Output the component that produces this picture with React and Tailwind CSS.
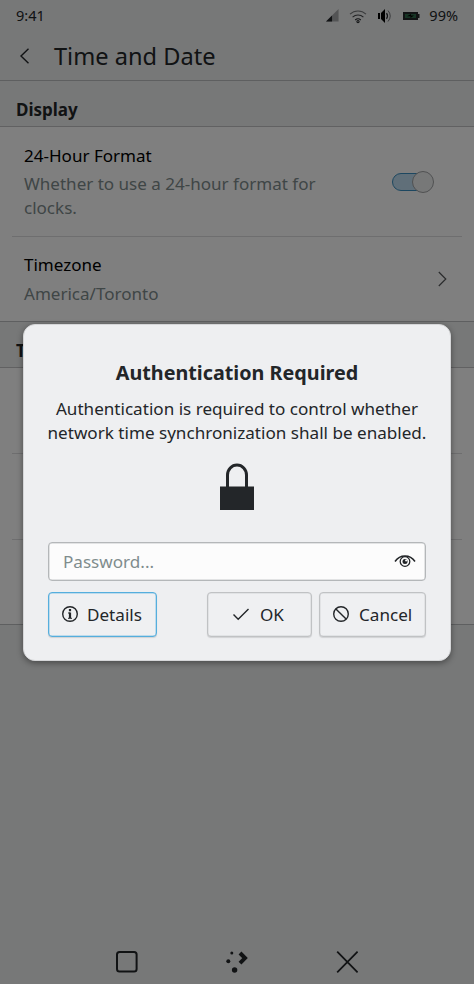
import React from 'react';

function StatusBar() {
  return (
    <div className="flex h-[31px] shrink-0 items-center justify-between pl-4 pr-4 text-[14.5px] leading-none">
      <span>9:41</span>
      <div className="flex items-center">
        <svg className="mr-[10px] h-[13px] w-[13px]" viewBox="0 0 14 14">
          <path d="M0 13.5 13.5 0v13.5z" fill="#232629" opacity="0.35" />
          <path d="M0 13.5 6.5 7v6.5z" fill="#232629" />
        </svg>
        <svg className="mr-[10px] h-4 w-[18px]" viewBox="0 0 18 16" fill="none" stroke="#232629" strokeWidth="1.1">
          <path d="M1 6.2a11.5 11.5 0 0 1 16 0" opacity="0.6" />
          <path d="M3.6 9.2a7.8 7.8 0 0 1 10.8 0" opacity="0.85" />
          <path d="M6.2 12a4.2 4.2 0 0 1 5.6 0" />
          <circle cx="9" cy="13.6" r="1.1" />
        </svg>
        <svg className="mr-[11px] h-4 w-[15px]" viewBox="0 0 15 16">
          <path d="M1 5h2v6H1zM4 5l4-4v14l-4-4z" fill="#000" />
          <path d="M9.5 5.2q2 2.8 0 5.6" fill="none" stroke="#232629" strokeWidth="1.2" />
          <path d="M11 2.5q4.5 5.5 0 11" fill="none" stroke="#232629" opacity="0.6" />
        </svg>
        <svg className="mr-[9px] h-2 w-[17px]" viewBox="0 0 17 8">
          <path d="M0 0h15v2h1.5v4H15v2H0z" fill="#232629" />
          <path d="M2 2h11v4H2z" fill="#2f6a4b" />
          <path d="M4 4.3 8 2v1.5h3L7.5 6V4.3z" fill="#000" />
        </svg>
        <span>99%</span>
      </div>
    </div>
  );
}

function SectionHeader({ children }) {
  return (
    <div className="flex h-[46px] shrink-0 items-center border-b border-[#c2c3c5] px-4 pt-3 text-[17px] font-bold leading-none">
      {children}
    </div>
  );
}

function Separator() {
  return <div className="mx-3 h-px bg-[#dcdddf]" />;
}

function Switch() {
  return (
    <div className="flex h-[22px] w-[42px] items-center">
      <div className="flex h-[18px] w-[41px] items-center justify-end rounded-full border-[1.5px] border-[#3a8fc0] bg-[#c0dff2]">
        <div className="-mr-[2px] h-[22px] w-[22px] shrink-0 rounded-full border border-[#a0a2a4] bg-[#eff0f1]" />
      </div>
    </div>
  );
}

function SettingsPage() {
  return (
    <div className="flex h-full flex-col bg-[#eff0f1]">
      <StatusBar />
      <header className="flex h-[50px] shrink-0 items-center border-b border-[#bcbec0] pl-[19px] pt-px">
        <svg className="h-4 w-[11px]" viewBox="0 0 11 16" fill="none" stroke="#232629" strokeWidth="1.4">
          <path d="M9.5.8 2 8l7.5 7.2" />
        </svg>
        <h1 className="ml-6 pt-px text-[23.6px] leading-none">Time and Date</h1>
      </header>

      <SectionHeader>Display</SectionHeader>
      <div className="shrink-0 border-b border-[#bcbec0] bg-white">
        <div className="flex h-[109px] items-center pl-6 pr-10">
          <div className="flex-1">
            <div className="text-[17.05px] leading-[25px] text-black">24-Hour Format</div>
            <div className="mt-1 w-[310px] text-[17.05px] leading-6 text-[#7f8c8d]">Whether to use a 24-hour format for clocks.</div>
          </div>
          <Switch />
        </div>
        <Separator />
        <div className="flex h-[84px] items-center pl-6 pr-[27px]">
          <div className="flex-1">
            <div className="text-[17.05px] leading-6 text-black">Timezone</div>
            <div className="mt-[5px] text-[17.05px] leading-6 text-[#7f8c8d]">America/Toronto</div>
          </div>
          <svg className="h-4 w-[9px]" viewBox="0 0 9 16" fill="none" stroke="#555759" strokeWidth="1.2">
            <path d="m.8 1 7 7-7 7" />
          </svg>
        </div>
      </div>

      <SectionHeader>Time and Date</SectionHeader>
      <div className="shrink-0 border-b border-[#bcbec0] bg-white">
        <div className="h-[85px]" />
        <Separator />
        <div className="h-[85px]" />
        <Separator />
        <div className="h-[84px]" />
      </div>

      <nav className="mt-auto flex h-[45px] shrink-0 items-center justify-center gap-[88px]">
        <svg className="h-[22px] w-[22px]" viewBox="0 0 22 22" fill="none" stroke="#232629" strokeWidth="2">
          <rect x="1" y="1" width="19.6" height="19.6" rx="2.5" />
        </svg>
        <svg className="h-[22px] w-[22px]" viewBox="0 0 22 22" fill="#232629">
          <circle cx="5.8" cy="1.9" r="1.5" />
          <circle cx="2.3" cy="10.2" r="2" />
          <circle cx="8.6" cy="19" r="2.7" />
          <path d="m14 2 5 5.1-5 5.1" fill="none" stroke="#232629" strokeWidth="4" />
        </svg>
        <svg className="h-[22px] w-[22px]" viewBox="0 0 22 22" fill="none" stroke="#232629" strokeWidth="1.8">
          <path d="m1.2.7 20.4 20.6M21.6.7 1.2 21.3" />
        </svg>
      </nav>
    </div>
  );
}

function DialogButton({ icon, label, className }) {
  return (
    <button className={`flex h-[45px] items-center rounded-[4px] border bg-[#eff0f2] text-[17.1px] leading-none ${className}`}>
      <svg className="h-4 w-4 shrink-0" viewBox="0 0 16 16" fill="none" stroke="#232629" strokeWidth="1.4">
        {icon}
      </svg>
      <span className="pt-[2px]">{label}</span>
    </button>
  );
}

function AuthDialog() {
  return (
    <div className="flex h-[337px] w-[428px] flex-col rounded-xl border border-[#d5d6d8] bg-[#eeeff1] px-6 shadow-[0_2px_6px_rgba(0,0,0,0.4)]">
      <h2 className="mt-9 text-center text-[19.75px] font-bold leading-6">Authentication Required</h2>
      <p className="-mx-3 mt-3 text-center text-[17.1px] leading-6">
        Authentication is required to control whether
        <br />
        network time synchronization shall be enabled.
      </p>
      <svg className="mx-auto mt-[18px] h-[47px] w-[34px] shrink-0" viewBox="0 0 34 47">
        <path d="M7.5 24V12a9.5 10 0 0 1 19 0v12" fill="none" stroke="#232629" strokeWidth="3" />
        <path d="M0 23.5h34V47H0z" fill="#232629" />
      </svg>
      <div className="mt-8 flex h-[39px] shrink-0 items-center justify-between rounded-[4px] border border-[#b4b7b9] bg-[#fcfcfc] pl-[14px] pr-[9px] shadow-[inset_0_0_0_0.5px_#c8cacc]">
        <span className="pt-[2px] text-[17.1px] leading-none text-[#7f8c8d]">Password...</span>
        <svg className="h-[14px] w-[22px]" viewBox="0 0 22 14" fill="none" stroke="#232629">
          <path d="M1 7.5C6 .2 16 .2 21 7.5" strokeWidth="1.5" />
          <circle cx="11" cy="7.5" r="4.8" strokeWidth="1.3" />
          <circle cx="11" cy="7.5" r="2.5" fill="#232629" stroke="none" />
          <circle cx="12.1" cy="6.4" r="1" fill="#fcfcfc" stroke="none" />
        </svg>
      </div>
      <div className="mt-[11px] flex">
        <DialogButton
          className="mr-auto w-[109px] gap-[9px] border-[#55aedd] pl-[13px] shadow-[inset_0_0_0_0.5px_#8cc6e6,0_1px_1px_rgba(0,0,0,0.12)]"
          label="Details"
          icon={
            <>
              <circle cx="8" cy="8" r="7.3" />
              <path d="M8 3v2.3M8 6.5V12" strokeWidth="2.2" />
              <path d="M6 7h2M6 12.3h4" strokeWidth="1" />
            </>
          }
        />
        <DialogButton
          className="mr-[7px] w-[105px] gap-[11px] border-[#c0c2c4] pl-[25px] shadow-[inset_0_0_0_0.5px_#d4d6d8,0_1px_1px_rgba(0,0,0,0.12)]"
          label="OK"
          icon={<path d="m.5 8.5 4.7 4.8L15.5 3" />}
        />
        <DialogButton
          className="w-[107px] gap-[10px] border-[#c0c2c4] pl-[13px] shadow-[inset_0_0_0_0.5px_#d4d6d8,0_1px_1px_rgba(0,0,0,0.12)]"
          label="Cancel"
          icon={
            <>
              <circle cx="8" cy="8" r="7.3" />
              <path d="m2.9 2.9 10.2 10.2" />
            </>
          }
        />
      </div>
    </div>
  );
}

export default function App() {
  return (
    <div className="relative h-[984px] w-[474px] overflow-hidden font-['Noto_Sans',sans-serif] text-[#232629]">
      <SettingsPage />
      <div className="absolute inset-0 flex items-center justify-center bg-black/50">
        <AuthDialog />
      </div>
    </div>
  );
}
